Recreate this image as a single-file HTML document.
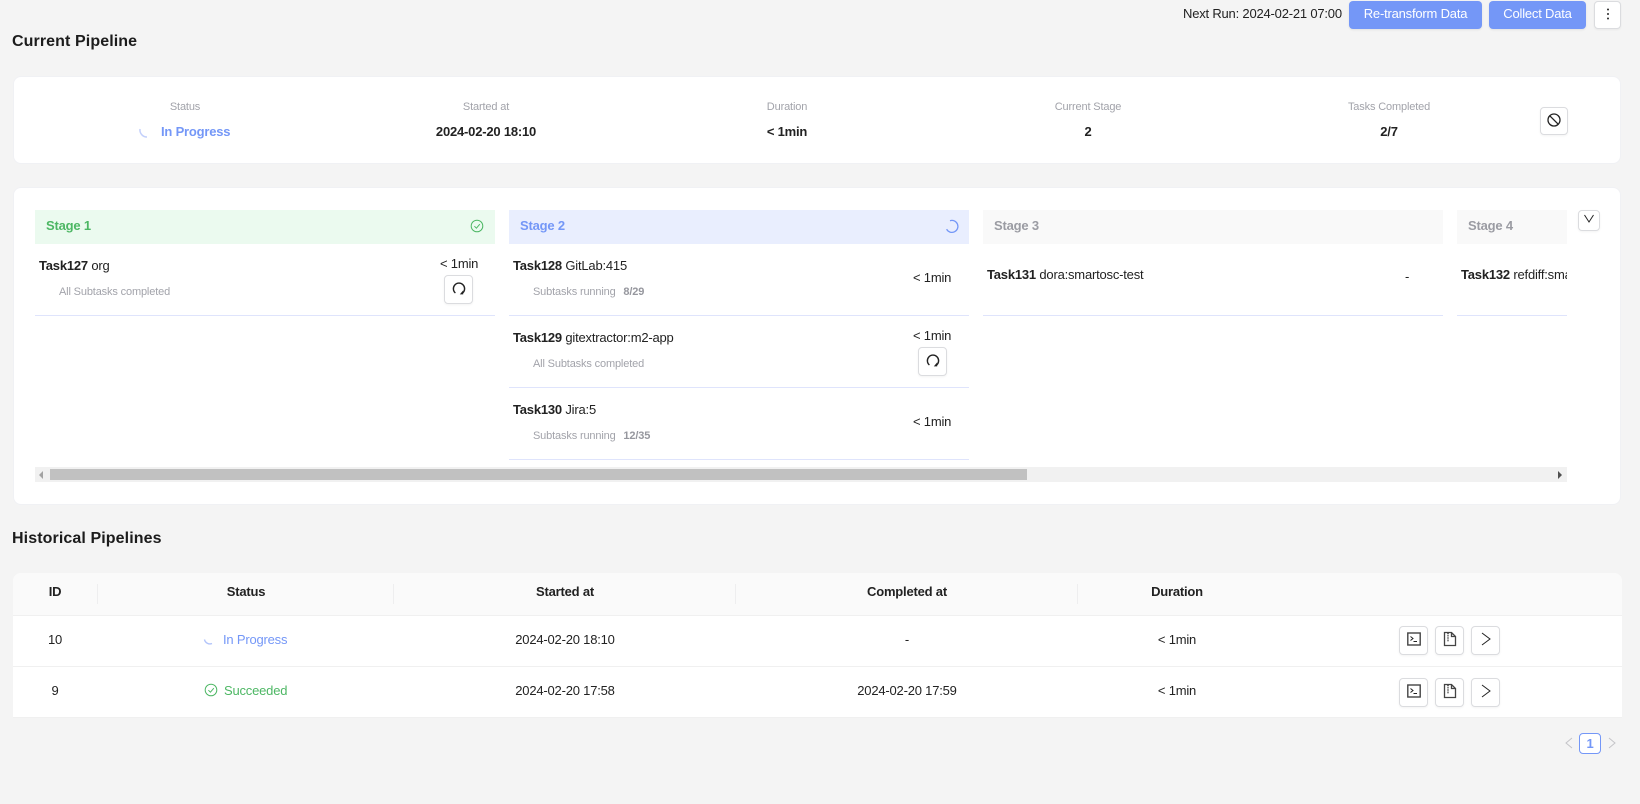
<!DOCTYPE html>
<html><head><meta charset="utf-8"><title>Pipelines</title>
<style>
*{box-sizing:border-box}
html,body{margin:0;padding:0;width:1640px;height:804px;overflow:hidden;background:#f4f4f4;font-family:"Liberation Sans",sans-serif;color:#222;font-size:13px;letter-spacing:-.2px}
.a{position:absolute}
.t{position:absolute;white-space:nowrap;line-height:20px;height:20px}
.c{transform:translateX(-50%)}
.card{position:absolute;background:#fff;border:1px solid #f0f1f4;border-radius:8px}
.b{font-weight:700}
.g{color:#a2a3aa;font-size:11px;letter-spacing:-.15px}
.g b{margin-left:2px;color:#96979e}
.h{font-weight:700;font-size:16px;letter-spacing:.1px;color:#1c1c1c}
.btn{position:absolute;background:#fff;border:1px solid #dbdcdf;border-radius:4px;box-shadow:0 1px 2px rgba(0,0,0,.05);display:flex;align-items:center;justify-content:center}
.pri{position:absolute;background:#7497f7;color:#fff;border-radius:4px;height:28px;top:1px;line-height:26px;text-align:center;font-size:13px;box-shadow:0 1px 2px rgba(0,0,0,.08)}
.stage{position:absolute;top:210px;height:34px;line-height:32px;font-weight:700;padding-left:11px}
.line{position:absolute;height:1px;background:#dfe4fc}
.div{position:absolute;top:584px;width:1px;height:20px;background:#eeeeef}
svg{display:block;overflow:visible}
</style></head>
<body>
<div class="t" style="left:1183px;top:4px">Next Run: 2024-02-21 07:00</div>
<div class="pri" style="left:1349px;width:133px">Re-transform Data</div>
<div class="pri" style="left:1489px;width:97px">Collect Data</div>
<div class="btn" style="left:1594px;top:1px;width:27px;height:28px"><svg width="14" height="14" viewBox="0 0 14 14" style="margin-top:-2px"><circle cx="7" cy="2.5" r="1" fill="#292929"/><circle cx="7" cy="7" r="1" fill="#292929"/><circle cx="7" cy="11.5" r="1" fill="#292929"/></svg></div>
<div class="t h" style="left:12px;top:32px">Current Pipeline</div>

<div class="card" style="left:13px;top:76px;width:1608px;height:88px"></div>
<div class="t g c" style="left:185px;top:97px">Status</div>
<div class="a" style="left:138px;top:125px"><svg width="14" height="14" viewBox="0 0 14 14"><path d="M2 4A7 7 0 0 0 9 12" fill="none" stroke="#c3d0fb" stroke-width="1.5"/></svg></div>
<div class="t b" style="left:161px;top:122px;color:#7497f7">In Progress</div>
<div class="t g c" style="left:486px;top:97px">Started at</div>
<div class="t b c" style="left:486px;top:122px">2024-02-20 18:10</div>
<div class="t g c" style="left:787px;top:97px">Duration</div>
<div class="t b c" style="left:787px;top:122px">&lt; 1min</div>
<div class="t g c" style="left:1088px;top:97px">Current Stage</div>
<div class="t b c" style="left:1088px;top:122px">2</div>
<div class="t g c" style="left:1389px;top:97px">Tasks Completed</div>
<div class="t b c" style="left:1389px;top:122px">2/7</div>
<div class="btn" style="left:1540px;top:107px;width:28px;height:28px"><svg width="14" height="14" viewBox="0 0 14 14" style="margin-top:-2px"><circle cx="7" cy="7" r="6" fill="none" stroke="#222" stroke-width="1.3"/><path d="M2.8 2.8L11.2 11.2" stroke="#222" stroke-width="1.3"/></svg></div>

<div class="card" style="left:13px;top:187px;width:1608px;height:318px"></div>
<div class="stage" style="left:35px;width:460px;background:#ebfaef;color:#4db764">Stage 1</div>
<div class="a" style="left:470px;top:219px"><svg width="14" height="14" viewBox="0 0 14 14"><circle cx="7" cy="7" r="5.8" fill="none" stroke="#4db764"/><path d="M4.4 7.2L6.4 9.2L9.8 5.2" fill="none" stroke="#4db764"/></svg></div>
<div class="stage" style="left:509px;width:460px;background:#e9eefe;color:#7497f7">Stage 2</div>
<div class="a" style="left:945px;top:220px"><svg width="14" height="14" viewBox="0 0 14 14"><path d="M5 .7A6 6 0 1 1 1.6 9.2" fill="none" stroke="#7497f7" stroke-width="1.3"/></svg></div>
<div class="stage" style="left:983px;width:460px;background:#f9f9f9;color:#9b9ca3">Stage 3</div>
<div class="stage" style="left:1457px;width:110px;background:#f9f9f9;color:#9b9ca3;padding-left:11px">Stage 4</div>
<div class="btn" style="left:1578px;top:210px;width:22px;height:21px"><svg width="12" height="12" viewBox="0 0 12 12" style="margin-top:-3px"><path d="M1.5 2L6 9L10.5 2" fill="none" stroke="#222" stroke-width="1"/></svg></div>

<div class="t" style="left:39px;top:256px"><b>Task127</b> org</div>
<div class="t g" style="left:59px;top:282px">All Subtasks completed</div>
<div class="t" style="left:440px;top:254px">&lt; 1min</div>
<div class="btn" style="left:444px;top:275px;width:29px;height:29px"><svg width="14" height="14" viewBox="0 0 14 14" style="margin-top:-3px"><path d="M3.4 12A5.6 5.6 0 1 1 10.6 12" fill="none" stroke="#222" stroke-width="1.4"/><path d="M11.2 9.4L11.2 13.4L7.8 13.4Z" fill="#222"/></svg></div>
<div class="line" style="left:35px;top:315px;width:460px"></div>

<div class="t" style="left:513px;top:256px"><b>Task128</b> GitLab:415</div>
<div class="t g" style="left:533px;top:282px">Subtasks running&nbsp;&nbsp;<b>8/29</b></div>
<div class="t" style="left:913px;top:268px">&lt; 1min</div>
<div class="line" style="left:509px;top:315px;width:460px"></div>

<div class="t" style="left:513px;top:328px"><b>Task129</b> gitextractor:m2-app</div>
<div class="t g" style="left:533px;top:354px">All Subtasks completed</div>
<div class="t" style="left:913px;top:326px">&lt; 1min</div>
<div class="btn" style="left:918px;top:347px;width:29px;height:29px"><svg width="14" height="14" viewBox="0 0 14 14" style="margin-top:-3px"><path d="M3.4 12A5.6 5.6 0 1 1 10.6 12" fill="none" stroke="#222" stroke-width="1.4"/><path d="M11.2 9.4L11.2 13.4L7.8 13.4Z" fill="#222"/></svg></div>
<div class="line" style="left:509px;top:387px;width:460px"></div>

<div class="t" style="left:513px;top:400px"><b>Task130</b> Jira:5</div>
<div class="t g" style="left:533px;top:426px">Subtasks running&nbsp;&nbsp;<b>12/35</b></div>
<div class="t" style="left:913px;top:412px">&lt; 1min</div>
<div class="line" style="left:509px;top:459px;width:460px"></div>

<div class="t" style="left:987px;top:265px"><b>Task131</b> dora:smartosc-test</div>
<div class="t" style="left:1405px;top:267px">-</div>
<div class="line" style="left:983px;top:315px;width:460px"></div>

<div class="a" style="left:1457px;top:265px;width:110px;height:20px;overflow:hidden"><div class="t" style="left:4px;top:0"><b>Task132</b> refdiff:smartosc-test</div></div>
<div class="line" style="left:1457px;top:315px;width:110px"></div>

<div class="a" style="left:35px;top:467px;width:1532px;height:15px;background:#f1f1f1"></div>
<div class="a" style="left:50px;top:469px;width:977px;height:11px;background:#c1c1c1"></div>
<div class="a" style="left:39px;top:471px;width:0;height:0;border:4px solid transparent;border-left:0;border-right:4px solid #a3a3a3"></div>
<div class="a" style="left:1558px;top:471px;width:0;height:0;border:4px solid transparent;border-right:0;border-left:4px solid #505050"></div>

<div class="t h" style="left:12px;top:529px">Historical Pipelines</div>

<div class="a" style="left:13px;top:573px;width:1609px;height:144px;background:#fff;border-radius:8px 8px 0 0"></div>
<div class="a" style="left:13px;top:573px;width:1609px;height:43px;background:#fafafa;border-bottom:1px solid #f0f0f0;border-radius:8px 8px 0 0"></div>
<div class="a" style="left:13px;top:666px;width:1609px;height:1px;background:#f0f0f0"></div>
<div class="a" style="left:13px;top:717px;width:1609px;height:1px;background:#f0f0f0"></div>
<div class="div" style="left:97px"></div><div class="div" style="left:393px"></div><div class="div" style="left:735px"></div><div class="div" style="left:1077px"></div>
<div class="t b c" style="left:55px;top:582px">ID</div>
<div class="t b c" style="left:246px;top:582px">Status</div>
<div class="t b c" style="left:565px;top:582px">Started at</div>
<div class="t b c" style="left:907px;top:582px">Completed at</div>
<div class="t b c" style="left:1177px;top:582px">Duration</div>

<div class="t c" style="left:55px;top:630px">10</div>
<div class="a" style="left:203px;top:632px"><svg width="14" height="14" viewBox="0 0 14 14"><path d="M1.5 7.5A5.5 5.5 0 0 0 9 11.5" fill="none" stroke="#b2c4fa" stroke-width="1.4"/></svg></div>
<div class="t" style="left:223px;top:630px;color:#7497f7">In Progress</div>
<div class="t c" style="left:565px;top:630px">2024-02-20 18:10</div>
<div class="t c" style="left:907px;top:630px">-</div>
<div class="t c" style="left:1177px;top:630px">&lt; 1min</div>

<div class="t c" style="left:55px;top:681px">9</div>
<div class="a" style="left:204px;top:683px"><svg width="14" height="14" viewBox="0 0 14 14"><circle cx="7" cy="7" r="5.8" fill="none" stroke="#4db764"/><path d="M4.4 7.2L6.4 9.2L9.8 5.2" fill="none" stroke="#4db764"/></svg></div>
<div class="t" style="left:224px;top:681px;color:#4db764">Succeeded</div>
<div class="t c" style="left:565px;top:681px">2024-02-20 17:58</div>
<div class="t c" style="left:907px;top:681px">2024-02-20 17:59</div>
<div class="t c" style="left:1177px;top:681px">&lt; 1min</div>

<div class="btn" style="left:1399px;top:626px;width:29px;height:29px"><svg width="14" height="14" viewBox="0 0 14 14" style="margin-top:-4px"><rect x=".8" y="1" width="12.4" height="12" fill="none" stroke="#444" stroke-width="1.4"/><path d="M3.5 4.5L6 6.5L3.5 8.5M6.5 9.5H10" fill="none" stroke="#222"/></svg></div>
<div class="btn" style="left:1435px;top:626px;width:29px;height:29px"><svg width="14" height="14" viewBox="0 0 14 14" style="margin-top:-4px"><path d="M1.5 .5H8.5L12.5 4.5V13.5H1.5Z M8.5 .5V4.5H12.5" fill="none" stroke="#444" stroke-width="1.3"/><path d="M5 1V10" stroke="#444" stroke-width="1.6" stroke-dasharray="1.2 1"/></svg></div>
<div class="btn" style="left:1471px;top:626px;width:29px;height:29px"><svg width="14" height="14" viewBox="0 0 14 14" style="margin-top:-4px"><path d="M3 1L11 7L3 13" fill="none" stroke="#222"/></svg></div>

<div class="btn" style="left:1399px;top:678px;width:29px;height:29px"><svg width="14" height="14" viewBox="0 0 14 14" style="margin-top:-4px"><rect x=".8" y="1" width="12.4" height="12" fill="none" stroke="#444" stroke-width="1.4"/><path d="M3.5 4.5L6 6.5L3.5 8.5M6.5 9.5H10" fill="none" stroke="#222"/></svg></div>
<div class="btn" style="left:1435px;top:678px;width:29px;height:29px"><svg width="14" height="14" viewBox="0 0 14 14" style="margin-top:-4px"><path d="M1.5 .5H8.5L12.5 4.5V13.5H1.5Z M8.5 .5V4.5H12.5" fill="none" stroke="#444" stroke-width="1.3"/><path d="M5 1V10" stroke="#444" stroke-width="1.6" stroke-dasharray="1.2 1"/></svg></div>
<div class="btn" style="left:1471px;top:678px;width:29px;height:29px"><svg width="14" height="14" viewBox="0 0 14 14" style="margin-top:-4px"><path d="M3 1L11 7L3 13" fill="none" stroke="#222"/></svg></div>

<div class="a" style="left:1564px;top:737px"><svg width="10" height="12" viewBox="0 0 10 12"><path d="M8 1L2 6L8 11" fill="none" stroke="#c4c4c8"/></svg></div>
<div class="a b" style="left:1579px;top:733px;width:22px;height:21px;border:1px solid #7497f7;border-radius:4px;background:#fff;color:#7497f7;text-align:center;line-height:19px">1</div>
<div class="a" style="left:1607px;top:737px"><svg width="10" height="12" viewBox="0 0 10 12"><path d="M2 1L8 6L2 11" fill="none" stroke="#c4c4c8"/></svg></div>
</body></html>
